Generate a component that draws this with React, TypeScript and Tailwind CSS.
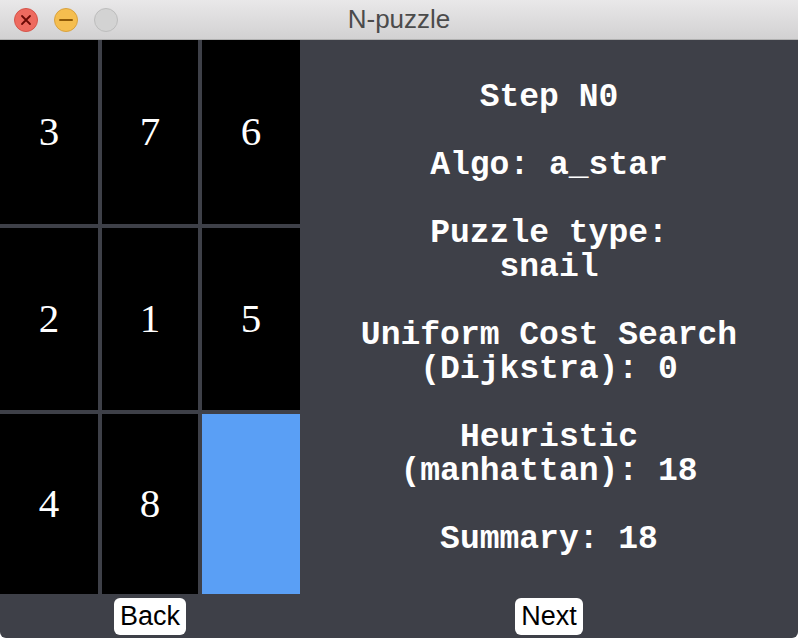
import React from "react";

const tiles: (number | null)[] = [3, 7, 6, 2, 1, 5, 4, 8, null];

function TrafficLights() {
  return (
    <div className="flex items-center gap-[16px] pl-[14px]">
      <div className="w-[24px] h-[24px] rounded-full bg-[#ee6a5f] border border-[#d5544a] flex items-center justify-center">
        <svg width="12" height="12" viewBox="0 0 12 12">
          <path d="M2 2 L10 10 M10 2 L2 10" stroke="#6b0a05" strokeWidth="1.8" strokeLinecap="round" />
        </svg>
      </div>
      <div className="w-[24px] h-[24px] rounded-full bg-[#f5be4f] border border-[#d9a23f] flex items-center justify-center">
        <svg width="14" height="4" viewBox="0 0 14 4">
          <path d="M1 2 L13 2" stroke="#8f5a07" strokeWidth="2" strokeLinecap="round" />
        </svg>
      </div>
      <div className="w-[24px] h-[24px] rounded-full bg-[#d3d3d3] border border-[#bdbdbd]" />
    </div>
  );
}

export default function App() {
  const colW = ["98px", "96px", "98px"];
  const rowH = ["184px", "182px", "180px"];
  return (
    <div className="w-[798px] h-[638px] bg-white overflow-hidden">
      <div className="w-[798px] h-[638px] flex flex-col rounded-b-[6px] overflow-hidden bg-[#3e4048]">
        {/* Title bar */}
        <div className="relative h-[40px] shrink-0 bg-gradient-to-b from-[#e9e8e9] to-[#d2d1d2] border-b border-[#b1b1b1] flex items-center">
          <TrafficLights />
          <div
            className="absolute left-0 right-0 top-0 h-[39px] flex items-center justify-center text-[26px] text-[#4b4b4b] pointer-events-none"
            style={{ fontFamily: '"Liberation Sans", Arial, sans-serif' }}
          >
            N-puzzle
          </div>
        </div>

        {/* Body */}
        <div className="flex h-[554px] shrink-0">
          <div
            className="grid w-[300px] gap-[4px] bg-[#3e4048]"
            style={{ gridTemplateColumns: colW.join(" "), gridTemplateRows: rowH.join(" ") }}
          >
            {tiles.map((t, i) => (
              <div
                key={i}
                className={
                  t === null
                    ? "bg-[#5a9ff5]"
                    : "bg-black flex items-center justify-center text-white text-[41px]"
                }
                style={{ fontFamily: '"Liberation Serif", "Times New Roman", serif' }}
              >
                {t}
              </div>
            ))}
          </div>
          <div
            className="flex-1 flex flex-col items-center pt-[41px] gap-[34px] text-white text-[33px] leading-[34px] font-bold text-center"
            style={{ fontFamily: '"Liberation Mono", "Courier New", monospace' }}
          >
            <div>Step N0</div>
            <div>Algo: a_star</div>
            <div className="flex flex-col items-center">
              <span>Puzzle type:</span>
              <span>snail</span>
            </div>
            <div className="flex flex-col items-center">
              <span>Uniform Cost Search</span>
              <span>(Dijkstra): 0</span>
            </div>
            <div className="flex flex-col items-center">
              <span>Heuristic</span>
              <span>(manhattan): 18</span>
            </div>
            <div>Summary: 18</div>
          </div>
        </div>

        {/* Bottom buttons */}
        <div
          className="flex flex-1 pt-[4px]"
          style={{ fontFamily: '"Liberation Sans", Arial, sans-serif' }}
        >
          <div className="w-[300px] flex justify-center items-start">
            <button className="w-[72px] h-[37px] bg-white rounded-[6px] text-black text-[27px] leading-none flex items-center justify-center">
              Back
            </button>
          </div>
          <div className="flex-1 flex justify-center items-start">
            <button className="w-[68px] h-[37px] bg-white rounded-[6px] text-black text-[27px] leading-none flex items-center justify-center">
              Next
            </button>
          </div>
        </div>
      </div>
    </div>
  );
}
